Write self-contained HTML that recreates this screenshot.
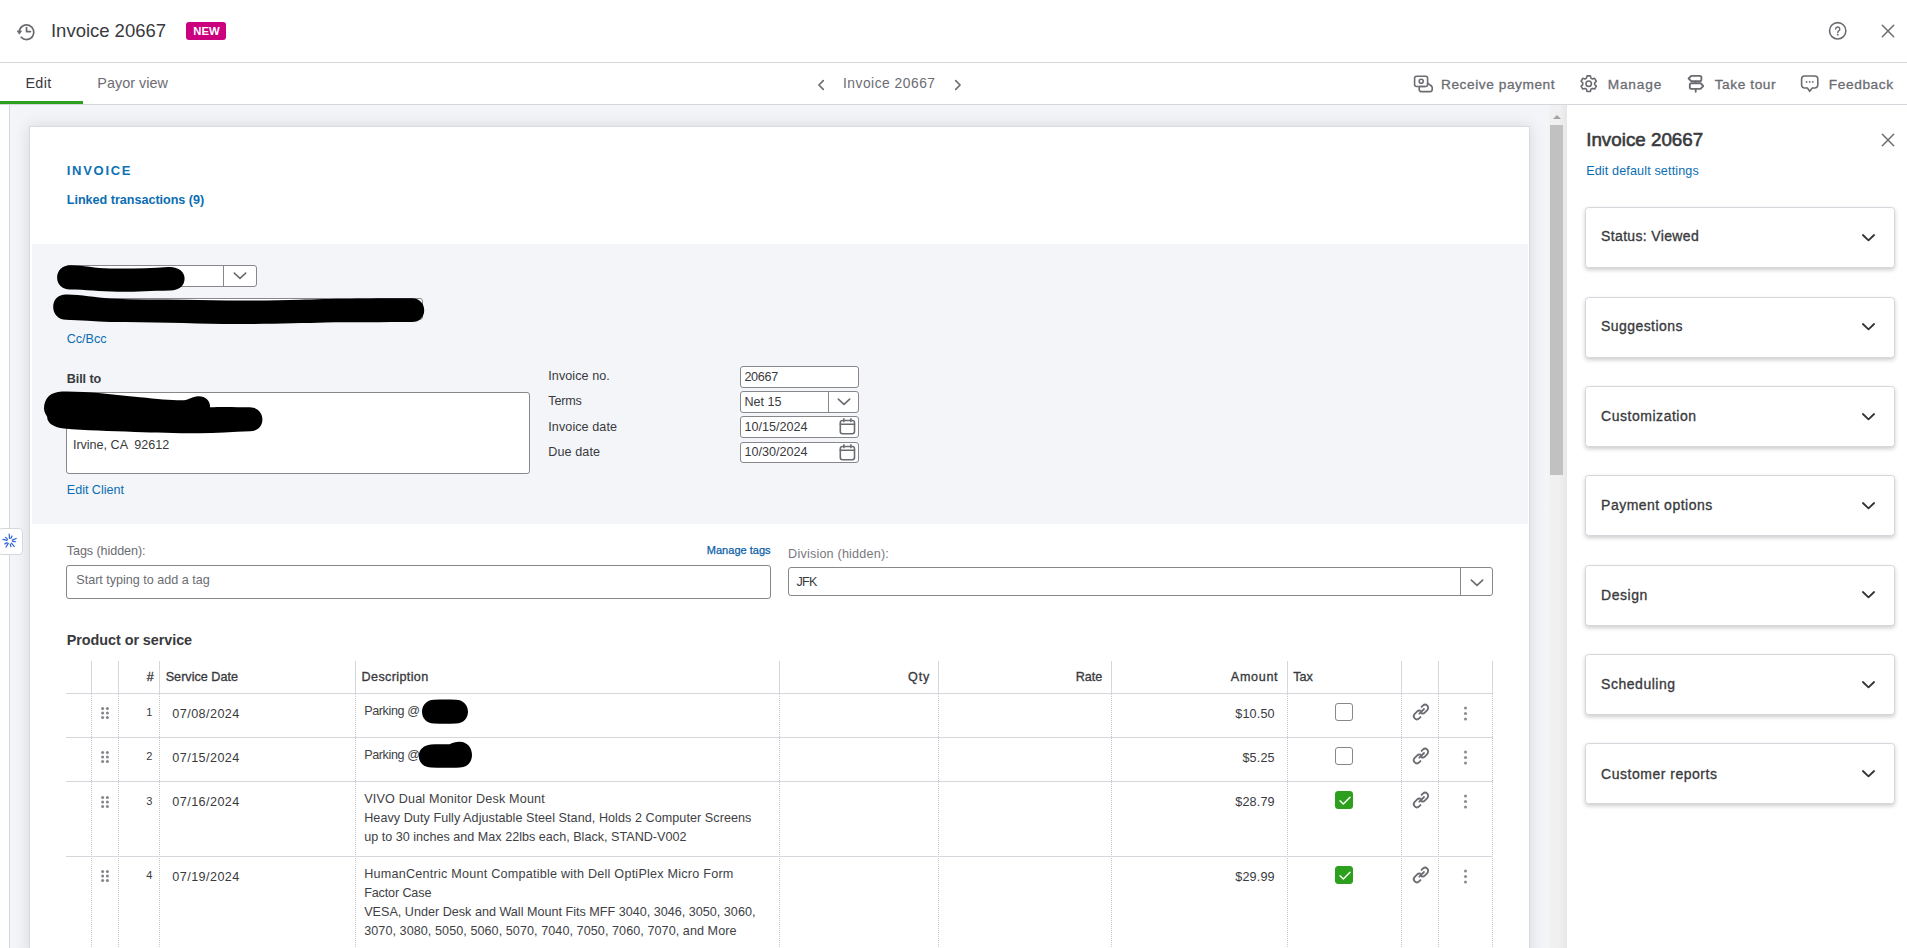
<!DOCTYPE html>
<html>
<head>
<meta charset="utf-8">
<title>Invoice 20667</title>
<style>
*{box-sizing:border-box;margin:0;padding:0}
html,body{width:1907px;height:948px;overflow:hidden;background:#fff}
body{font-family:"Liberation Sans",sans-serif;color:#393a3d;position:relative;font-size:12.6px}
.abs{position:absolute}
.t{position:absolute;white-space:nowrap;line-height:1}
svg{position:absolute;overflow:visible}
#hdr{left:0;top:0;width:1907px;height:63px;background:#fff;border-bottom:1px solid #d4d7dc}
#tabs{left:0;top:63px;width:1907px;height:42px;background:#fff;border-bottom:1px solid #d4d7dc}
#greenbar{left:0;top:101px;width:83px;height:3px;background:#2ca01c}
#main{left:10px;top:105px;width:1557px;height:843px;background:#f4f5f8;overflow:hidden}
#leftline{left:9px;top:105px;width:1px;height:843px;background:#d4d7dc}
#strack{left:1549px;top:105px;width:18px;height:843px;background:linear-gradient(to right,#f1f1f2 0,#f0f0f1 10px,#e7e7e9 18px)}
#paper{left:20px;top:22px;width:1499px;height:830px;background:#fff;box-shadow:0 0 0 1px #d9dadf,0 0 14px 2px rgba(60,64,80,.14)}
#greysec{left:32px;top:244px;width:1496px;height:280px;background:#f4f5f8}
#sthumb{left:1550px;top:125px;width:13px;height:350px;background:#c1c1c1}
#panel{left:1567px;top:105px;width:340px;height:843px;background:#fff}
#starbtn{left:-2px;top:528px;width:24.5px;height:26.5px;background:#fff;border:1px solid #d4d7dc;border-radius:4px}
.card{position:absolute;left:1585px;width:310px;height:61px;background:#fff;border:1px solid #d4d7dc;border-radius:3.5px;box-shadow:0 2px 4px rgba(0,0,0,.2)}
.inp{position:absolute;background:#fff;border:1px solid #87888c;border-radius:3px}
.hl{position:absolute;height:1px;background:#d4d7dc}
.vl{position:absolute;width:1px;background:#d4d7dc}
.vd{position:absolute;width:1px;background:repeating-linear-gradient(to bottom,#c6c8cc 0,#c6c8cc 1px,transparent 1px,transparent 2px)}
.cb{position:absolute;left:1335px;width:18px;height:18px;border:1px solid #87888c;border-radius:3px;background:#fff}
.cb.on{background:#2ca01c;border-color:#2ca01c}
</style>
</head>
<body>
<div class="abs" id="hdr"></div><div class="abs" id="tabs"></div><div class="abs" id="greenbar"></div>
<div class="abs" id="main"><div class="abs" id="paper"></div></div><div class="abs" id="strack"></div><div class="abs" id="leftline"></div>
<div class="abs" id="greysec"></div>
<div class="abs" id="sthumb"></div><div class="abs" id="panel"></div>
<svg style="left:1552.5px;top:115px" width="8" height="4" viewBox="0 0 8 4"><path d="M0 4 L4 0 L8 4Z" fill="#a3a3a3"/></svg>
<div class="abs" id="starbtn"></div>
<svg style="left:0;top:0" width="30" height="948" viewBox="0 0 30 948"><path d="M9.51 538.41 L9.21 534.12 M10.92 538.36 L11.98 535.98 M12.20 540.09 L16.19 538.48 M12.68 541.41 L15.27 541.69 M11.44 543.17 L14.20 546.46 M10.32 544.03 L10.86 546.58 M8.27 543.39 L5.99 547.04 M7.10 542.60 L4.85 543.90 M7.08 540.45 L2.91 539.41 M7.47 539.09 L5.54 537.35" stroke="#2f63d6" stroke-width="1.25" stroke-linecap="round" fill="none"/></svg>
<svg style="left:16.2px;top:22.1px" width="20" height="20" viewBox="0 0 20 20"><g fill="none" stroke="#6b6c72" stroke-width="1.75" stroke-linecap="round" stroke-linejoin="round"><path d="M3.3 9.2 A7.3 7.3 0 1 1 5.3 15.3"/><path d="M10.55 5.6 V9.6 H14.4"/></g><path d="M1.1 8.9 L5.6 8.9 L3.35 12.2Z" fill="#6b6c72" stroke="#6b6c72" stroke-width="0.7" stroke-linejoin="round"/></svg>
<div class="t" id="title" style="letter-spacing:-0.017px;left:51.00px;top:21.84px;font-size:18.5px;color:#393a3d;">Invoice 20667</div>
<div class="abs" id="badge" style="left:186px;top:22px;width:40px;height:18px;background:#cb007e;border-radius:3px"></div>
<div class="t" id="badget" style="letter-spacing:-0.030px;left:193.30px;top:26.03px;font-size:11.3px;font-weight:bold;color:#fff;">NEW</div>
<svg style="left:1828px;top:21px" width="20" height="20" viewBox="0 0 20 20"><circle cx="9.7" cy="9.8" r="8.15" fill="none" stroke="#6b6c72" stroke-width="1.6"/><g transform="translate(9.75 10.2) scale(.82) translate(-9.8 -10.3)"><path d="M7.3 7.7 A2.5 2.5 0 1 1 10.9 9.9 C10 10.4 9.8 10.9 9.8 11.9" fill="none" stroke="#6b6c72" stroke-width="1.8" stroke-linecap="round"/><circle cx="9.8" cy="14.5" r="1.15" fill="#6b6c72"/></g></svg>
<svg style="left:1882px;top:25px" width="12" height="12" viewBox="0 0 12 12"><path d="M0.3 0.3 L11.7 11.7 M11.7 0.3 L0.3 11.7" stroke="#6b6c72" stroke-width="1.5" stroke-linecap="round"/></svg>
<div class="t" id="tabedit" style="letter-spacing:0.362px;left:25.40px;top:76.21px;font-size:14.4px;color:#393a3d;">Edit</div>
<div class="t" id="tabpayor" style="letter-spacing:0.012px;left:97.30px;top:76.21px;font-size:14.4px;color:#6b6c72;">Payor view</div>
<div class="t" id="navt" style="letter-spacing:0.507px;left:843.00px;top:76.72px;font-size:13.8px;color:#6b6c72;">Invoice 20667</div>
<svg style="left:818px;top:80px" width="6" height="10" viewBox="0 0 6 10"><path d="M5.3 0.6 L0.9 5 L5.3 9.4" fill="none" stroke="#6b6c72" stroke-width="1.6" stroke-linecap="round" stroke-linejoin="round"/></svg>
<svg style="left:955px;top:80px" width="6" height="10" viewBox="0 0 6 10"><path d="M0.7 0.6 L5.1 5 L0.7 9.4" fill="none" stroke="#6b6c72" stroke-width="1.6" stroke-linecap="round" stroke-linejoin="round"/></svg>
<div class="t" id="rp" style="letter-spacing:0.560px;left:1441.00px;top:77.60px;font-size:13.7px;color:#6b6c72;-webkit-text-stroke:0.3px #6b6c72;">Receive payment</div>
<div class="t" id="mg" style="letter-spacing:0.826px;left:1607.70px;top:77.60px;font-size:13.7px;color:#6b6c72;-webkit-text-stroke:0.3px #6b6c72;">Manage</div>
<div class="t" id="tt" style="letter-spacing:0.573px;left:1714.70px;top:77.60px;font-size:13.7px;color:#6b6c72;-webkit-text-stroke:0.3px #6b6c72;">Take tour</div>
<div class="t" id="fb" style="letter-spacing:0.596px;left:1828.80px;top:77.60px;font-size:13.7px;color:#6b6c72;-webkit-text-stroke:0.3px #6b6c72;">Feedback</div>
<svg style="left:1413px;top:75px" width="21" height="18" viewBox="0 0 21 18"><g fill="none" stroke="#6b6c72" stroke-width="1.6" stroke-linejoin="round" stroke-linecap="round"><rect x="1.6" y="1.3" width="13" height="10.2" rx="2"/><circle cx="8.2" cy="6.2" r="2"/><path d="M6.2 11.5 V14.6 A2 2 0 0 0 8.2 16.6 H17.2 A2 2 0 0 0 19.2 14.6 V12.6 Q19.2 11.6 18.4 11 L14.6 8.2 M7 11.5 H11.6"/></g></svg>
<svg style="left:1580px;top:75px" width="18" height="18" viewBox="0 0 18 18"><path d="M6.49 3.12 L7.04 0.87 L10.36 0.87 L10.91 3.12 L12.43 4.00 L14.65 3.35 L16.31 6.23 L14.64 7.82 L14.64 9.58 L16.31 11.17 L14.65 14.05 L12.43 13.40 L10.91 14.28 L10.36 16.53 L7.04 16.53 L6.49 14.28 L4.97 13.40 L2.75 14.05 L1.09 11.17 L2.76 9.58 L2.76 7.82 L1.09 6.23 L2.75 3.35 L4.97 4.00Z" fill="none" stroke="#6b6c72" stroke-width="1.6" stroke-linejoin="round"/><circle cx="8.7" cy="8.7" r="2.7" fill="none" stroke="#6b6c72" stroke-width="1.6"/></svg>
<svg style="left:1687px;top:74px" width="18" height="19" viewBox="0 0 18 19"><g fill="none" stroke="#6b6c72" stroke-width="1.85" stroke-linejoin="round" stroke-linecap="round"><path d="M4.2 1.8 H12.8 A1.6 1.6 0 0 1 14.4 3.4 V5.6 A1.6 1.6 0 0 1 12.8 7.2 H4.2 L1.6 4.5 Z"/><path d="M4.4 9.2 H13.6 L16.2 12 L13.6 14.8 H4.4 A1.6 1.6 0 0 1 2.8 13.2 V10.8 A1.6 1.6 0 0 1 4.4 9.2 Z"/><path d="M8.7 15 V17.8 M8.7 7.4 V9"/></g></svg>
<svg style="left:1800px;top:74px" width="20" height="20" viewBox="0 0 20 20"><path d="M4.6 2 H14.8 A3 3 0 0 1 17.8 5 V11 A3 3 0 0 1 14.8 14 H12.3 L9.7 17.3 L7.4 14 H4.6 A3 3 0 0 1 1.6 11 V5 A3 3 0 0 1 4.6 2 Z" fill="none" stroke="#6b6c72" stroke-width="1.6" stroke-linejoin="round"/><g fill="#6b6c72"><circle cx="6.6" cy="7.9" r="0.9"/><circle cx="9.7" cy="7.9" r="0.9"/><circle cx="12.8" cy="7.9" r="0.9"/></g></svg>
<div class="t" id="invh" style="letter-spacing:1.705px;left:66.80px;top:164.20px;font-size:13px;font-weight:bold;color:#0d72b5;">INVOICE</div>
<div class="t" id="linked" style="letter-spacing:-0.022px;left:66.80px;top:193.63px;font-size:12.6px;font-weight:bold;color:#0a6db3;">Linked transactions (9)</div>
<div class="inp" id="custdd" style="left:66px;top:265px;width:191px;height:22px"></div>
<div class="vl" style="left:223px;top:266px;height:20px;background:#87888c"></div>
<svg style="left:232.5px;top:272px" width="14" height="8" viewBox="0 0 14 8"><path d="M1.3 1.1 L7 6.4 L12.7 1.1" fill="none" stroke="#6b6c72" stroke-width="1.6" stroke-linecap="round" stroke-linejoin="round"/></svg>
<div class="inp" id="emailinp" style="left:66px;top:298px;width:357px;height:22px"></div>
<div class="t" id="ccbcc" style="letter-spacing:-0.038px;left:66.80px;top:332.83px;font-size:12.6px;color:#0a6db3;">Cc/Bcc</div>
<div class="t" id="billto" style="letter-spacing:-0.097px;left:66.80px;top:372.93px;font-size:12.6px;font-weight:bold;color:#393a3d;">Bill to</div>
<div class="inp" id="billta" style="left:66px;top:392px;width:464px;height:82px"></div>
<div class="t" id="irvine" style="letter-spacing:-0.014px;left:72.90px;top:438.83px;font-size:12.6px;color:#393a3d;white-space:pre;">Irvine, CA  92612</div>
<div class="t" id="editclient" style="letter-spacing:-0.031px;left:66.80px;top:483.93px;font-size:12.6px;color:#0a6db3;">Edit Client</div>
<div class="t" id="l1" style="letter-spacing:0.058px;left:548.30px;top:370.33px;font-size:12.6px;color:#393a3d;">Invoice no.</div>
<div class="t" id="l2" style="letter-spacing:-0.174px;left:548.30px;top:395.33px;font-size:12.6px;color:#393a3d;">Terms</div>
<div class="t" id="l3" style="letter-spacing:0.071px;left:548.30px;top:420.63px;font-size:12.6px;color:#393a3d;">Invoice date</div>
<div class="t" id="l4" style="letter-spacing:0.082px;left:548.30px;top:445.63px;font-size:12.6px;color:#393a3d;">Due date</div>
<div class="inp" style="left:740px;top:366px;width:119px;height:22px"></div>
<div class="inp" style="left:740px;top:391px;width:119px;height:22px"></div>
<div class="inp" style="left:740px;top:416px;width:119px;height:22px"></div>
<div class="inp" style="left:740px;top:442px;width:119px;height:21px"></div>
<div class="t" id="v1" style="letter-spacing:-0.283px;left:744.40px;top:370.93px;font-size:12.6px;color:#393a3d;">20667</div>
<div class="t" id="v2" style="left:744.40px;top:395.73px;font-size:12.6px;color:#393a3d;">Net 15</div>
<div class="t" id="v3" style="left:744.60px;top:420.73px;font-size:12.6px;color:#393a3d;">10/15/2024</div>
<div class="t" id="v4" style="left:744.60px;top:445.93px;font-size:12.6px;color:#393a3d;">10/30/2024</div>
<div class="vl" style="left:828px;top:392px;height:20px;background:#87888c"></div>
<svg style="left:836.6px;top:397.5px" width="14" height="8" viewBox="0 0 14 8"><path d="M1.3 1.1 L7 6.4 L12.7 1.1" fill="none" stroke="#6b6c72" stroke-width="1.6" stroke-linecap="round" stroke-linejoin="round"/></svg>
<svg style="left:838.6px;top:418px" width="17" height="17" viewBox="0 0 17 17"><rect x="1.3" y="2.5" width="14.2" height="13.2" rx="2.2" fill="none" stroke="#6b6c72" stroke-width="1.6"/><path d="M1.3 6.3H15.5M4.9 0.9V3.6M11.9 0.9V3.6" fill="none" stroke="#6b6c72" stroke-width="1.6" stroke-linecap="round"/></svg>
<svg style="left:838.6px;top:444px" width="17" height="17" viewBox="0 0 17 17"><rect x="1.3" y="2.5" width="14.2" height="13.2" rx="2.2" fill="none" stroke="#6b6c72" stroke-width="1.6"/><path d="M1.3 6.3H15.5M4.9 0.9V3.6M11.9 0.9V3.6" fill="none" stroke="#6b6c72" stroke-width="1.6" stroke-linecap="round"/></svg>
<div class="t" id="tagsl" style="letter-spacing:-0.078px;left:66.80px;top:544.73px;font-size:12.6px;color:#6b6c72;">Tags (hidden):</div>
<div class="t" id="mtags" style="letter-spacing:0.019px;left:706.80px;top:544.79px;font-size:11px;color:#0a5ea8;-webkit-text-stroke:0.25px #0a5ea8;">Manage tags</div>
<div class="inp" id="tagsinp" style="left:66px;top:565px;width:705px;height:34px"></div>
<div class="t" id="tagsph" style="letter-spacing:-0.014px;left:76.30px;top:573.93px;font-size:12.6px;color:#6b6c72;">Start typing to add a tag</div>
<div class="t" id="divl" style="letter-spacing:0.200px;left:788.10px;top:547.73px;font-size:12.6px;color:#77787e;">Division (hidden):</div>
<div class="inp" id="divinp" style="left:788px;top:567px;width:705px;height:29px"></div>
<div class="vl" style="left:1460px;top:568px;height:27px;background:#87888c"></div>
<svg style="left:1470px;top:579.1px" width="14" height="8" viewBox="0 0 14 8"><path d="M1.3 1.1 L7 6.4 L12.7 1.1" fill="none" stroke="#6b6c72" stroke-width="1.6" stroke-linecap="round" stroke-linejoin="round"/></svg>
<div class="t" id="jfk" style="letter-spacing:-0.695px;left:796.50px;top:575.83px;font-size:12.6px;color:#393a3d;">JFK</div>
<div class="t" id="pos" style="letter-spacing:-0.063px;left:66.80px;top:633.01px;font-size:14.4px;font-weight:bold;color:#393a3d;">Product or service</div>
<div class="vl" style="left:91px;top:661px;height:32px"></div>
<div class="vd" style="left:91px;top:694px;height:254px"></div>
<div class="vl" style="left:118px;top:661px;height:32px"></div>
<div class="vd" style="left:118px;top:694px;height:254px"></div>
<div class="vl" style="left:159px;top:661px;height:32px"></div>
<div class="vd" style="left:159px;top:694px;height:254px"></div>
<div class="vl" style="left:355px;top:661px;height:32px"></div>
<div class="vd" style="left:355px;top:694px;height:254px"></div>
<div class="vl" style="left:779px;top:661px;height:32px"></div>
<div class="vd" style="left:779px;top:694px;height:254px"></div>
<div class="vl" style="left:938px;top:661px;height:32px"></div>
<div class="vd" style="left:938px;top:694px;height:254px"></div>
<div class="vl" style="left:1111px;top:661px;height:32px"></div>
<div class="vd" style="left:1111px;top:694px;height:254px"></div>
<div class="vl" style="left:1287px;top:661px;height:32px"></div>
<div class="vd" style="left:1287px;top:694px;height:254px"></div>
<div class="vl" style="left:1401px;top:661px;height:32px"></div>
<div class="vd" style="left:1401px;top:694px;height:254px"></div>
<div class="vl" style="left:1438px;top:661px;height:32px"></div>
<div class="vd" style="left:1438px;top:694px;height:254px"></div>
<div class="vl" style="left:1492px;top:661px;height:32px"></div>
<div class="vd" style="left:1492px;top:694px;height:254px"></div>
<div class="hl" style="left:66px;top:693px;width:1427px"></div>
<div class="hl" style="left:66px;top:737px;width:1427px"></div>
<div class="hl" style="left:66px;top:781px;width:1427px"></div>
<div class="hl" style="left:66px;top:856px;width:1427px"></div>
<div class="t" id="h_num" style="letter-spacing:0.000px;left:146.80px;top:670.93px;font-size:12.6px;color:#393a3d;-webkit-text-stroke:0.32px #393a3d;">#</div>
<div class="t" id="h_sd" style="letter-spacing:0.017px;left:165.70px;top:670.93px;font-size:12.6px;color:#393a3d;-webkit-text-stroke:0.32px #393a3d;">Service Date</div>
<div class="t" id="h_desc" style="letter-spacing:0.360px;left:361.60px;top:670.93px;font-size:12.6px;color:#393a3d;-webkit-text-stroke:0.32px #393a3d;">Description</div>
<div class="t" id="h_qty" style="letter-spacing:0.853px;right:976.85px;top:670.93px;font-size:12.6px;color:#393a3d;-webkit-text-stroke:0.32px #393a3d;">Qty</div>
<div class="t" id="h_rate" style="right:804.70px;top:670.93px;font-size:12.6px;color:#393a3d;-webkit-text-stroke:0.32px #393a3d;">Rate</div>
<div class="t" id="h_amt" style="letter-spacing:0.679px;right:628.72px;top:670.93px;font-size:12.6px;color:#393a3d;-webkit-text-stroke:0.32px #393a3d;">Amount</div>
<div class="t" id="h_tax" style="left:1293.30px;top:670.93px;font-size:12.6px;color:#393a3d;-webkit-text-stroke:0.32px #393a3d;">Tax</div>
<svg style="left:101px;top:707px" width="8" height="13" viewBox="0 0 8 13"><g fill="#85868b"><circle cx="1.6" cy="1.5" r="1.5"/><circle cx="6.4" cy="1.5" r="1.5"/><circle cx="1.6" cy="6" r="1.5"/><circle cx="6.4" cy="6" r="1.5"/><circle cx="1.6" cy="10.6" r="1.5"/><circle cx="6.4" cy="10.6" r="1.5"/></g></svg>
<div class="t" id="rn0" style="right:1754.70px;top:707.19px;font-size:11px;color:#393a3d;">1</div>
<div class="t" id="d0" style="letter-spacing:0.441px;left:172.30px;top:707.53px;font-size:12.6px;color:#393a3d;">07/08/2024</div>
<div class="t" id="ds0_0" style="letter-spacing:-0.398px;left:364.20px;top:704.93px;font-size:12.6px;color:#404145;">Parking @</div>
<div class="t" id="a0" style="right:632.30px;top:707.53px;font-size:12.6px;color:#393a3d;letter-spacing:.15px;">$10.50</div>
<div class="cb" style="top:703px"></div>
<svg style="left:1412px;top:703px" width="18" height="18" viewBox="0 0 18 18"><g fill="none" stroke="#6b6c72" stroke-width="1.95" stroke-linecap="round" transform="translate(9 9) scale(.935) translate(-9 -9)"><path d="M7.2 10.8 L12.2 5.8 M9.6 3.6 L11 2.2 A3.3 3.3 0 0 1 15.7 6.9 L13 9.6 A3.3 3.3 0 0 1 9.6 10.4"/><path d="M8.4 14.4 L7 15.8 A3.3 3.3 0 0 1 2.3 11.1 L5 8.4 A3.3 3.3 0 0 1 8.4 7.6"/></g></svg>
<svg style="left:1463px;top:705.8px" width="5" height="15" viewBox="0 0 5 15"><g fill="#8d9096"><circle cx="2.5" cy="2" r="1.6"/><circle cx="2.5" cy="7.5" r="1.6"/><circle cx="2.5" cy="13" r="1.6"/></g></svg>
<svg style="left:101px;top:751px" width="8" height="13" viewBox="0 0 8 13"><g fill="#85868b"><circle cx="1.6" cy="1.5" r="1.5"/><circle cx="6.4" cy="1.5" r="1.5"/><circle cx="1.6" cy="6" r="1.5"/><circle cx="6.4" cy="6" r="1.5"/><circle cx="1.6" cy="10.6" r="1.5"/><circle cx="6.4" cy="10.6" r="1.5"/></g></svg>
<div class="t" id="rn1" style="right:1754.70px;top:751.19px;font-size:11px;color:#393a3d;">2</div>
<div class="t" id="d1" style="letter-spacing:0.441px;left:172.30px;top:751.53px;font-size:12.6px;color:#393a3d;">07/15/2024</div>
<div class="t" id="ds1_0" style="letter-spacing:-0.398px;left:364.20px;top:748.73px;font-size:12.6px;color:#404145;">Parking @</div>
<div class="t" id="a1" style="right:632.30px;top:751.53px;font-size:12.6px;color:#393a3d;letter-spacing:.15px;">$5.25</div>
<div class="cb" style="top:747px"></div>
<svg style="left:1412px;top:747px" width="18" height="18" viewBox="0 0 18 18"><g fill="none" stroke="#6b6c72" stroke-width="1.95" stroke-linecap="round" transform="translate(9 9) scale(.935) translate(-9 -9)"><path d="M7.2 10.8 L12.2 5.8 M9.6 3.6 L11 2.2 A3.3 3.3 0 0 1 15.7 6.9 L13 9.6 A3.3 3.3 0 0 1 9.6 10.4"/><path d="M8.4 14.4 L7 15.8 A3.3 3.3 0 0 1 2.3 11.1 L5 8.4 A3.3 3.3 0 0 1 8.4 7.6"/></g></svg>
<svg style="left:1463px;top:749.8px" width="5" height="15" viewBox="0 0 5 15"><g fill="#8d9096"><circle cx="2.5" cy="2" r="1.6"/><circle cx="2.5" cy="7.5" r="1.6"/><circle cx="2.5" cy="13" r="1.6"/></g></svg>
<svg style="left:101px;top:796px" width="8" height="13" viewBox="0 0 8 13"><g fill="#85868b"><circle cx="1.6" cy="1.5" r="1.5"/><circle cx="6.4" cy="1.5" r="1.5"/><circle cx="1.6" cy="6" r="1.5"/><circle cx="6.4" cy="6" r="1.5"/><circle cx="1.6" cy="10.6" r="1.5"/><circle cx="6.4" cy="10.6" r="1.5"/></g></svg>
<div class="t" id="rn2" style="right:1754.70px;top:796.19px;font-size:11px;color:#393a3d;">3</div>
<div class="t" id="d2" style="letter-spacing:0.441px;left:172.30px;top:795.53px;font-size:12.6px;color:#393a3d;">07/16/2024</div>
<div class="t" id="ds2_0" style="letter-spacing:0.182px;left:364.20px;top:793.03px;font-size:12.6px;color:#404145;">VIVO Dual Monitor Desk Mount</div>
<div class="t" id="ds2_1" style="letter-spacing:0.056px;left:364.20px;top:811.93px;font-size:12.6px;color:#404145;">Heavy Duty Fully Adjustable Steel Stand, Holds 2 Computer Screens</div>
<div class="t" id="ds2_2" style="letter-spacing:0.010px;left:364.20px;top:830.73px;font-size:12.6px;color:#404145;">up to 30 inches and Max 22lbs each, Black, STAND-V002</div>
<div class="t" id="a2" style="right:632.30px;top:795.53px;font-size:12.6px;color:#393a3d;letter-spacing:.15px;">$28.79</div>
<div class="cb on" style="top:791px"><svg style="left:3px;top:4px" width="12" height="9" viewBox="0 0 12 9"><path d="M1 4.8 L4.3 8 L11 1.2" fill="none" stroke="#fff" stroke-width="1.4" stroke-linecap="round" stroke-linejoin="round"/></svg></div>
<svg style="left:1412px;top:791px" width="18" height="18" viewBox="0 0 18 18"><g fill="none" stroke="#6b6c72" stroke-width="1.95" stroke-linecap="round" transform="translate(9 9) scale(.935) translate(-9 -9)"><path d="M7.2 10.8 L12.2 5.8 M9.6 3.6 L11 2.2 A3.3 3.3 0 0 1 15.7 6.9 L13 9.6 A3.3 3.3 0 0 1 9.6 10.4"/><path d="M8.4 14.4 L7 15.8 A3.3 3.3 0 0 1 2.3 11.1 L5 8.4 A3.3 3.3 0 0 1 8.4 7.6"/></g></svg>
<svg style="left:1463px;top:793.8px" width="5" height="15" viewBox="0 0 5 15"><g fill="#8d9096"><circle cx="2.5" cy="2" r="1.6"/><circle cx="2.5" cy="7.5" r="1.6"/><circle cx="2.5" cy="13" r="1.6"/></g></svg>
<svg style="left:101px;top:870px" width="8" height="13" viewBox="0 0 8 13"><g fill="#85868b"><circle cx="1.6" cy="1.5" r="1.5"/><circle cx="6.4" cy="1.5" r="1.5"/><circle cx="1.6" cy="6" r="1.5"/><circle cx="6.4" cy="6" r="1.5"/><circle cx="1.6" cy="10.6" r="1.5"/><circle cx="6.4" cy="10.6" r="1.5"/></g></svg>
<div class="t" id="rn3" style="right:1754.70px;top:870.19px;font-size:11px;color:#393a3d;">4</div>
<div class="t" id="d3" style="letter-spacing:0.441px;left:172.30px;top:870.53px;font-size:12.6px;color:#393a3d;">07/19/2024</div>
<div class="t" id="ds3_0" style="letter-spacing:0.235px;left:364.20px;top:868.23px;font-size:12.6px;color:#404145;">HumanCentric Mount Compatible with Dell OptiPlex Micro Form</div>
<div class="t" id="ds3_1" style="letter-spacing:-0.139px;left:364.20px;top:887.13px;font-size:12.6px;color:#404145;">Factor Case</div>
<div class="t" id="ds3_2" style="letter-spacing:0.006px;left:364.20px;top:906.03px;font-size:12.6px;color:#404145;">VESA, Under Desk and Wall Mount Fits MFF 3040, 3046, 3050, 3060,</div>
<div class="t" id="ds3_3" style="letter-spacing:0.065px;left:364.20px;top:925.03px;font-size:12.6px;color:#404145;">3070, 3080, 5050, 5060, 5070, 7040, 7050, 7060, 7070, and More</div>
<div class="t" id="a3" style="right:632.30px;top:870.53px;font-size:12.6px;color:#393a3d;letter-spacing:.15px;">$29.99</div>
<div class="cb on" style="top:866px"><svg style="left:3px;top:4px" width="12" height="9" viewBox="0 0 12 9"><path d="M1 4.8 L4.3 8 L11 1.2" fill="none" stroke="#fff" stroke-width="1.4" stroke-linecap="round" stroke-linejoin="round"/></svg></div>
<svg style="left:1412px;top:866px" width="18" height="18" viewBox="0 0 18 18"><g fill="none" stroke="#6b6c72" stroke-width="1.95" stroke-linecap="round" transform="translate(9 9) scale(.935) translate(-9 -9)"><path d="M7.2 10.8 L12.2 5.8 M9.6 3.6 L11 2.2 A3.3 3.3 0 0 1 15.7 6.9 L13 9.6 A3.3 3.3 0 0 1 9.6 10.4"/><path d="M8.4 14.4 L7 15.8 A3.3 3.3 0 0 1 2.3 11.1 L5 8.4 A3.3 3.3 0 0 1 8.4 7.6"/></g></svg>
<svg style="left:1463px;top:868.8px" width="5" height="15" viewBox="0 0 5 15"><g fill="#8d9096"><circle cx="2.5" cy="2" r="1.6"/><circle cx="2.5" cy="7.5" r="1.6"/><circle cx="2.5" cy="13" r="1.6"/></g></svg>
<svg style="left:0;top:0" width="1907" height="948" viewBox="0 0 1907 948"><g fill="#000"><path d="M70 265.2 C82 265 95 268.2 110 268.5 C128 268.8 150 268.4 168 267 C178 266.3 184.6 271.5 184.6 278.6 C184.6 286 179 290.6 170 290.5 C150 290.8 135 292 118 291.8 C100 291.6 85 289.6 70 289.6 C62 289.6 57.1 284.5 57.1 277.6 C57.1 270.3 62.5 265.3 70 265.2 Z"/><path d="M66 294.6 C80 294.4 95 297.6 110 298.5 C135 299.8 160 299.2 185 299.8 C225 300.8 270 300.6 300 299.7 C330 298.6 380 298.1 412 298.2 C420 298.3 424.2 304 424.2 310.2 C424.2 316.8 420 321.9 412 322.1 C385 322.3 350 322.2 325 322.6 C300 323.4 250 324.3 223 324 C190 323.2 150 322.4 110 322 C95 321.4 80 320.2 66 319.8 C58 319.5 53.2 313.8 53.2 307 C53.2 299.8 58 294.8 66 294.6 Z"/><path d="M62 391.5 C85 391 110 394.2 140 397.2 C158 399 172 400.4 184 400.2 C189 399.8 192 396.6 198.5 396.3 C206 396.2 210.5 401.5 210 407.2 C222 406.6 238 407 250 407.3 C258 407.6 262.4 413 262.4 419.4 C262.4 426 258 431 250 431.2 C232 431.6 215 433.4 198 433.3 C175 433.3 155 432.6 135 432 C110 431.2 85 430.4 64 428.6 C54 427.6 47 423 47.2 417 C46 414.5 44 412 44 408.5 C44 398.5 50.5 391.8 62 391.5 Z"/><path d="M434 699.7 C441 699.4 449 699.4 456 699.7 C463.5 700 468 705.2 468 711.7 C468 718.2 463.5 723.2 456 723.5 C449 723.8 441 723.8 434 723.5 C426.5 723.2 422 718.2 422 711.7 C422 705.2 426.5 700 434 699.7 Z"/><path d="M431 744.4 C437 743.9 444 744.3 449.5 744.2 C452.5 742.8 456 741.7 460 741.8 C467.5 742 472 748 472 755 C472 762 467.5 767.2 460 767.5 C451 767.9 440 768 431 767.6 C423.5 767.3 418.8 762.3 418.8 756 C418.8 749.7 423.5 744.9 431 744.4 Z"/></g></svg>
<div class="t" id="ptitle" style="letter-spacing:0.004px;left:1586.20px;top:131.19px;font-size:18.8px;color:#393a3d;-webkit-text-stroke:0.6px #393a3d;">Invoice 20667</div>
<svg style="left:1882px;top:134px" width="12" height="12" viewBox="0 0 12 12"><path d="M0.3 0.3 L11.7 11.7 M11.7 0.3 L0.3 11.7" stroke="#6b6c72" stroke-width="1.5" stroke-linecap="round"/></svg>
<div class="t" id="pedit" style="letter-spacing:0.134px;left:1586.20px;top:164.93px;font-size:12.6px;color:#0a6db3;">Edit default settings</div>
<div class="card" style="top:207px"></div>
<div class="t" id="c0" style="letter-spacing:0.343px;left:1601.10px;top:229.25px;font-size:14px;color:#393a3d;-webkit-text-stroke:0.32px #393a3d;">Status: Viewed</div>
<svg style="left:1862.3px;top:233.8px" width="13" height="8" viewBox="0 0 13 8"><path d="M0.9 1 L6.5 6.4 L12.1 1" fill="none" stroke="#2f3033" stroke-width="1.75" stroke-linecap="round" stroke-linejoin="round"/></svg>
<div class="card" style="top:296.5px"></div>
<div class="t" id="c1" style="letter-spacing:0.424px;left:1601.10px;top:319.35px;font-size:14px;color:#393a3d;-webkit-text-stroke:0.32px #393a3d;">Suggestions</div>
<svg style="left:1862.3px;top:323.3px" width="13" height="8" viewBox="0 0 13 8"><path d="M0.9 1 L6.5 6.4 L12.1 1" fill="none" stroke="#2f3033" stroke-width="1.75" stroke-linecap="round" stroke-linejoin="round"/></svg>
<div class="card" style="top:386px"></div>
<div class="t" id="c2" style="letter-spacing:0.525px;left:1601.10px;top:408.75px;font-size:14px;color:#393a3d;-webkit-text-stroke:0.32px #393a3d;">Customization</div>
<svg style="left:1862.3px;top:412.8px" width="13" height="8" viewBox="0 0 13 8"><path d="M0.9 1 L6.5 6.4 L12.1 1" fill="none" stroke="#2f3033" stroke-width="1.75" stroke-linecap="round" stroke-linejoin="round"/></svg>
<div class="card" style="top:475.3px"></div>
<div class="t" id="c3" style="letter-spacing:0.486px;left:1601.10px;top:498.45px;font-size:14px;color:#393a3d;-webkit-text-stroke:0.32px #393a3d;">Payment options</div>
<svg style="left:1862.3px;top:502.1px" width="13" height="8" viewBox="0 0 13 8"><path d="M0.9 1 L6.5 6.4 L12.1 1" fill="none" stroke="#2f3033" stroke-width="1.75" stroke-linecap="round" stroke-linejoin="round"/></svg>
<div class="card" style="top:564.6px"></div>
<div class="t" id="c4" style="letter-spacing:0.541px;left:1601.10px;top:587.55px;font-size:14px;color:#393a3d;-webkit-text-stroke:0.32px #393a3d;">Design</div>
<svg style="left:1862.3px;top:591.4px" width="13" height="8" viewBox="0 0 13 8"><path d="M0.9 1 L6.5 6.4 L12.1 1" fill="none" stroke="#2f3033" stroke-width="1.75" stroke-linecap="round" stroke-linejoin="round"/></svg>
<div class="card" style="top:654px"></div>
<div class="t" id="c5" style="letter-spacing:0.524px;left:1601.10px;top:677.05px;font-size:14px;color:#393a3d;-webkit-text-stroke:0.32px #393a3d;">Scheduling</div>
<svg style="left:1862.3px;top:680.8px" width="13" height="8" viewBox="0 0 13 8"><path d="M0.9 1 L6.5 6.4 L12.1 1" fill="none" stroke="#2f3033" stroke-width="1.75" stroke-linecap="round" stroke-linejoin="round"/></svg>
<div class="card" style="top:743.3px"></div>
<div class="t" id="c6" style="letter-spacing:0.510px;left:1601.10px;top:766.75px;font-size:14px;color:#393a3d;-webkit-text-stroke:0.32px #393a3d;">Customer reports</div>
<svg style="left:1862.3px;top:770.0999999999999px" width="13" height="8" viewBox="0 0 13 8"><path d="M0.9 1 L6.5 6.4 L12.1 1" fill="none" stroke="#2f3033" stroke-width="1.75" stroke-linecap="round" stroke-linejoin="round"/></svg>
</body>
</html>
